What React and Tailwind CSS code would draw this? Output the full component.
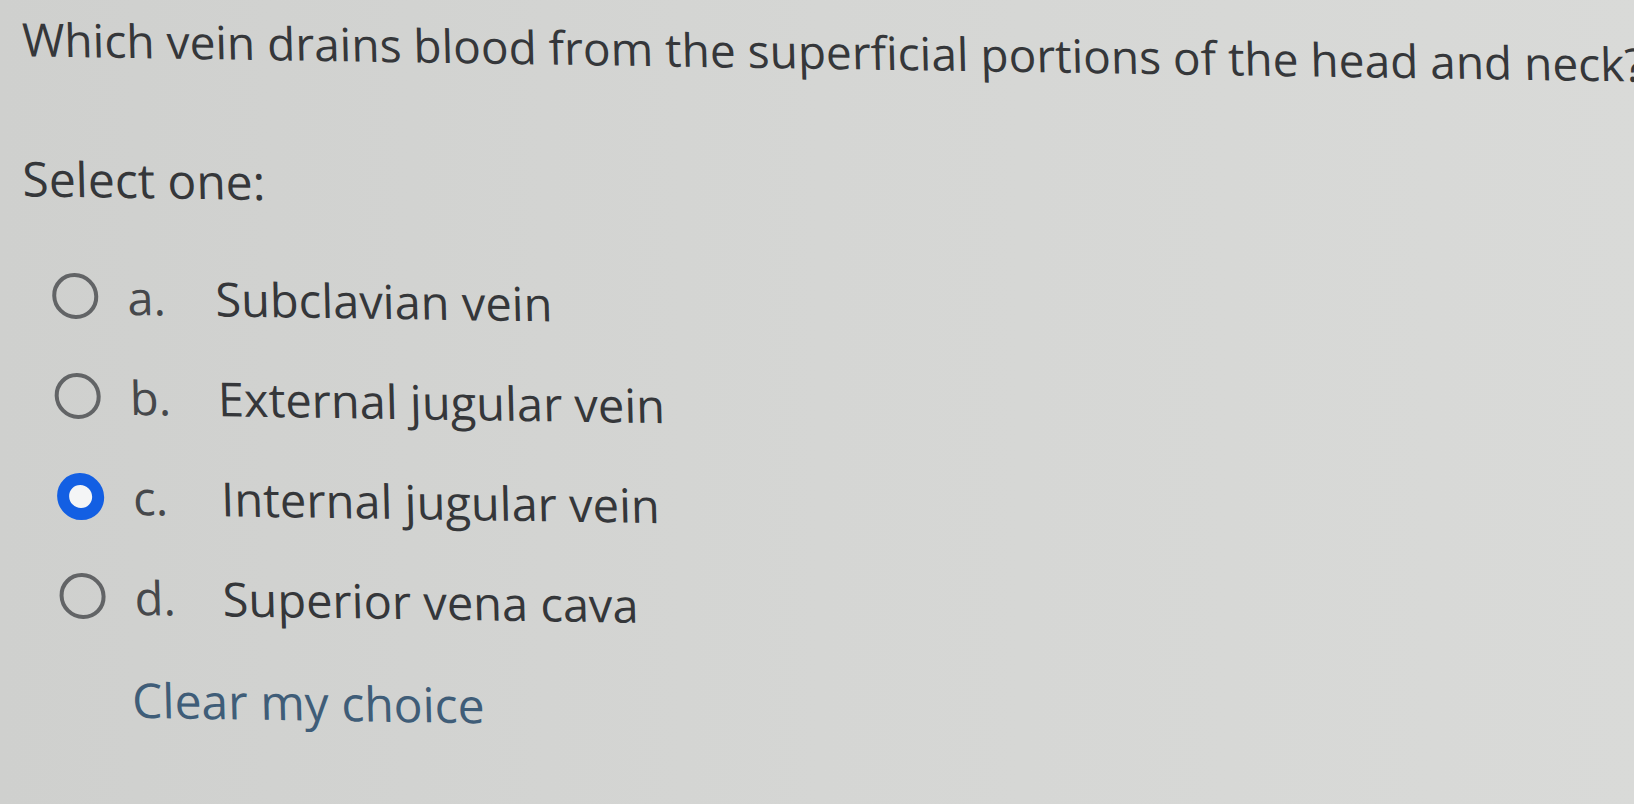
import React from "react";

const options = [
  { letter: "a.", text: "Subclavian vein", checked: false },
  { letter: "b.", text: "External jugular vein", checked: false },
  { letter: "c.", text: "Internal jugular vein", checked: true },
  { letter: "d.", text: "Superior vena cava", checked: false },
];

const Radio = ({ checked }) =>
  checked ? (
    <span className="h-[47px] w-[47px] shrink-0 rounded-full border-[12px] border-[#135fe3] bg-[#f4f5f6]" />
  ) : (
    <span className="h-[46px] w-[46px] shrink-0 rounded-full border-[4px] border-[#626466]" />
  );

export default function App() {
  return (
    <div className="h-[804px] w-[1634px] overflow-hidden bg-gradient-to-r from-[#cfd0ce] via-[#d5d6d4] to-[#d9dad8] font-['Open_Sans',sans-serif]">
      {/* photo of a screen: slight perspective lean */}
      <div className="origin-top-left skew-x-[1.4deg] skew-y-[0.9deg] pl-[21px] pt-[8px] text-[#35373a]">
        <p className="whitespace-nowrap text-[46px] leading-[60px]">
          Which vein drains blood from the superficial portions of the head and neck?
        </p>

        <p className="-ml-[3px] mt-[80px] text-[48px] leading-[60px]">Select one:</p>

        <div className="mt-[57px] flex flex-col gap-[40px] pl-[24px]">
          {options.map((o) => (
            <label key={o.letter} className="flex h-[60px] items-center">
              <Radio checked={o.checked} />
              <span className="ml-[29px] w-[88px] text-[47px] text-[#46484b]">{o.letter}</span>
              <span className="text-[47px] leading-[60px]">{o.text}</span>
            </label>
          ))}
        </div>

        <div className="mt-[43px] pl-[94px] text-[48px] leading-[60px] text-[#3f5d78]">
          Clear my choice
        </div>
      </div>
    </div>
  );
}
